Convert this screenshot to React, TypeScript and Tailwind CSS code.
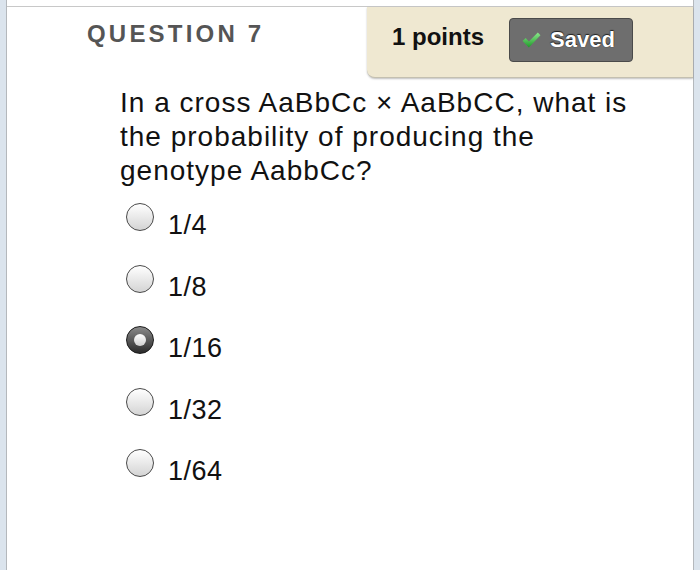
import React from "react";

const options = ["1/4", "1/8", "1/16", "1/32", "1/64"];

function Radio({ checked }: { checked: boolean }) {
  if (checked) {
    return (
      <div className="w-[28px] h-[28px] rounded-full border border-[#1a1a1a] bg-[linear-gradient(to_bottom,#8a8a8a,#2a2a2a)] flex items-center justify-center shrink-0">
        <div className="w-[12px] h-[12px] rounded-full bg-[linear-gradient(to_bottom,#ffffff,#cfcfcf)]" />
      </div>
    );
  }
  return (
    <div className="w-[28px] h-[28px] rounded-full border-[1.5px] border-[#4a4a4a] bg-[linear-gradient(to_bottom,#ffffff,#d4d4d4)] shrink-0" />
  );
}

export default function App() {
  return (
    <div className="w-[700px] h-[570px] flex bg-[#dde6ee] overflow-hidden" style={{ fontFamily: '"Liberation Sans", Arial, sans-serif' }}>
      <div className="w-[6px] shrink-0 bg-[#dbe4ed]" />
      <div className="w-[688px] shrink-0 bg-white border-l border-r border-[#b4b8bc] flex flex-col">
        <div className="h-[6px] bg-white" />
        <div className="border-t border-[#c8c8c8] flex">
          <div className="pl-[80px] pt-[13px] text-[24px] leading-[28px] font-bold tracking-[3.2px] text-[#555555]">
            QUESTION 7
          </div>
          <div className="ml-auto w-[326px] h-[71px] bg-[#efe8d1] border-b border-[#c4c0b0] rounded-bl-[8px] shadow-[0_1px_2px_rgba(0,0,0,0.25)] flex items-start pl-[25px] pt-[11px]">
            <div className="mt-[5px] text-[24px] leading-[28px] font-bold text-[#111111]">1 points</div>
            <div className="ml-[25px] w-[124px] h-[44px] rounded-[4px] border border-[#4a4a4a] bg-[#6e6e6e] flex items-center pl-[12px]">
              <svg width="19" height="16" viewBox="0 0 18 15">
                <defs>
                  <linearGradient id="g" x1="0" y1="0" x2="0" y2="1">
                    <stop offset="0" stopColor="#8be88b" />
                    <stop offset="1" stopColor="#1f9a2a" />
                  </linearGradient>
                </defs>
                <path d="M0.5 8.5 L3.5 5.5 L6.5 9 L15 0.5 L17.5 3 L6.5 14.5 Z" fill="url(#g)" />
              </svg>
              <span className="ml-[9px] text-[22px] leading-[28px] font-bold text-white [text-shadow:0_0_1px_#1a1a1a,0_-1px_1px_#222]">Saved</span>
            </div>
          </div>
        </div>
        <div className="pl-[113px] mt-[8px] text-[28px] leading-[34px] tracking-[1px] text-[#111111]">
          <div>In a cross AaBbCc × AaBbCC, what is</div>
          <div>the probability of producing the</div>
          <div>genotype AabbCc?</div>
        </div>
        <div className="pl-[119px] mt-[15px] flex flex-col gap-[24.5px]">
          {options.map((o, i) => (
            <div key={o} className="flex items-start">
              <Radio checked={i === 2} />
              <div className="ml-[14px] pt-[7px] text-[27px] leading-[30px] tracking-[0.5px] text-[#111111]">{o}</div>
            </div>
          ))}
        </div>
      </div>
      <div className="w-[6px] shrink-0 bg-[#dbe4ed]" />
    </div>
  );
}
